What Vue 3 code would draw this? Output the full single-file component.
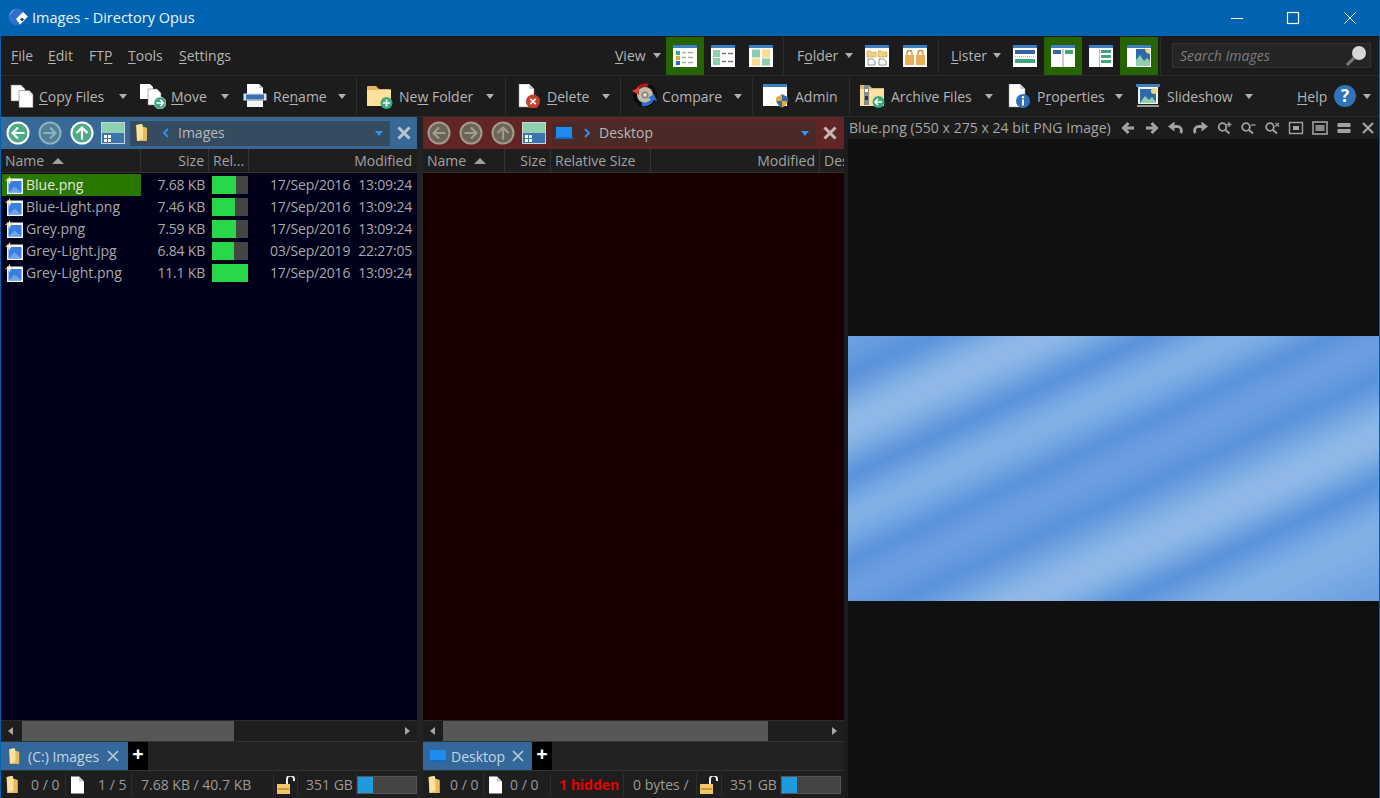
<script setup>
const parts = (s) => {
  const i = s.indexOf('&')
  if (i < 0) return [s, '', '']
  return [s.slice(0, i), s[i + 1], s.slice(i + 2)]
}

const menus = [
  { t: '&File', w: 37 }, { t: '&Edit', w: 41 }, { t: 'FT&P', w: 39 }, { t: '&Tools', w: 51 }, { t: '&Settings', w: 60 }
]

const topGroups = [
  { t: '&View', w: 38, icons: [['v1', true], ['v2', false], ['v3', false]], sepL: 3, sepR: 12 },
  { t: 'F&older', w: 48, icons: [['f1', false], ['f2', false]], sepL: 4, sepR: 11 },
  { t: '&Lister', w: 42, icons: [['l1', false], ['l2', true], ['l3', false], ['l4', true]], sepL: 2, sepR: 10 }
]

const tools = [
  { t: '&Copy Files', i: 'copy', iw: 24, w: 130, tx: 29, tw: 80 },
  { t: '&Move', i: 'move', iw: 26, w: 103, tx: 31, tw: 50 },
  { t: 'Re&name', i: 'rename', iw: 24, w: 113, tx: 30, tw: 65, sep: 10 },
  { t: 'Ne&w Folder', i: 'newfolder', iw: 26, w: 138, tx: 32, tw: 87, sep: 12 },
  { t: '&Delete', i: 'delete', iw: 24, w: 102, tx: 29, tw: 55, sep: 11 },
  { t: 'Compare', i: 'compare', iw: 26, w: 120, tx: 30, tw: 72, sep: 10 },
  { t: 'Admin', i: 'admin', iw: 26, w: 86, tx: 32, sep: 10, noCaret: true },
  { t: 'Archive Files', i: 'archive', iw: 26, w: 148, tx: 31, tw: 94 },
  { t: 'P&roperties', i: 'props', iw: 24, w: 128, tx: 29, tw: 78 },
  { t: 'Slideshow', i: 'slide', iw: 24, w: 161, tx: 31, tw: 78 }
]

const files = [
  { n: 'Blue.png', s: '7.68 KB', p: 67, d: '17/Sep/2016', h: '13:09:24', sel: true },
  { n: 'Blue-Light.png', s: '7.46 KB', p: 65, d: '17/Sep/2016', h: '13:09:24' },
  { n: 'Grey.png', s: '7.59 KB', p: 66, d: '17/Sep/2016', h: '13:09:24' },
  { n: 'Grey-Light.jpg', s: '6.84 KB', p: 60, d: '03/Sep/2019', h: '22:27:05' },
  { n: 'Grey-Light.png', s: '11.1 KB', p: 100, d: '17/Sep/2016', h: '13:09:24' }
]

const panes = [
  {
    key: 'left', title: 'Images', chev: 'chev-l', loc: 'pfolder', boxW: 260, backDim: false,
    cols: [
      { t: 'Name', w: 140, sort: true }, { t: 'Size', w: 68, r: true }, { t: 'Rel...', w: 40 }, { t: 'Modified', w: 167, r: true }
    ],
    files, tab: '(C:) Images', tabW: 127, tabIcon: 'pfolder', thumb: [21, 212],
    status: [
      { w: 65, icon: 'pfolder', t: '0 / 0', tx: 30 },
      { w: 66, icon: 'fpage', t: '1 / 5', tx: 32 },
      { w: 142, t: '7.68 KB / 40.7 KB', tx: 9 },
      { w: 24, lock: true },
      { w: 59, t: '351 GB', tx: 8 }
    ], fill: 25
  },
  {
    key: 'right', title: 'Desktop', chev: 'chev-r', loc: 'desk', boxW: 264, backDim: true,
    cols: [
      { t: 'Name', w: 82, sort: true }, { t: 'Size', w: 46, r: true }, { t: 'Relative Size', w: 100 }, { t: 'Modified', w: 169, r: true }, { t: 'Des', w: 24 }
    ],
    files: [], tab: 'Desktop', tabW: 109, tabIcon: 'desk', thumb: [20, 325],
    status: [
      { w: 61, icon: 'pfolder', t: '0 / 0', tx: 27 },
      { w: 67, icon: 'fpage', t: '0 / 0', tx: 26 },
      { w: 73, t: '1 hidden', tx: 8, red: true },
      { w: 73, t: '0 bytes /', tx: 9 },
      { w: 25, lock: true },
      { w: 59, t: '351 GB', tx: 8 }
    ], fill: 25
  }
]

const viewerBtns = ['prev', 'next', 'undo', 'redo', 'zin', 'zout', 'zx', 'fit1', 'fit2', 'bars', 'vclose']

// Soft diagonal bands of the previewed image: key points along the gradient line,
// eased with a mix of a smooth curve and one that leaves the dark bands a little faster.
const bands = [
  [0, [108, 160, 225]], [36, [90, 147, 219]], [82, [144, 185, 232]], [128, [90, 147, 219]],
  [165, [130, 176, 230]], [205, [90, 147, 219]], [232, [108, 158, 224]], [262, [90, 147, 219]],
  [315, [144, 185, 232]], [358, [90, 147, 219]], [400, [130, 176, 230]], [464, [106, 157, 224]]
]
const stops = []
for (let i = 0; i < bands.length - 1; i++) {
  const [p0, c0] = bands[i]
  const [p1, c1] = bands[i + 1]
  const rising = c1[0] > c0[0]
  for (let k = 0; k < 6; k++) {
    const t = k / 6
    const smooth = t * t * (3 - 2 * t)
    const skew = rising ? Math.sin((t * Math.PI) / 2) : 1 - Math.cos((t * Math.PI) / 2)
    const e = (smooth + skew) / 2
    const c = c0.map((v, j) => Math.round(v + (c1[j] - v) * e))
    stops.push(`rgb(${c.join(',')}) ${(p0 + (p1 - p0) * t).toFixed(1)}px`)
  }
}
stops.push('rgb(106,157,224) 464px')
const stripes = `linear-gradient(155deg, ${stops.join(', ')})`
</script>

<template>
  <div class="app">
    <svg class="sprite" xmlns="http://www.w3.org/2000/svg">
      <symbol id="i-logo" viewBox="0 0 20 20">
        <circle cx="9" cy="9" r="8.500" fill="#2f6fd0"/><path d="M1.500 8a8 8 0 0 1 9-7c-4 0-7 2.500-9 7z" fill="#b5d5f7"/>
        <path d="M8 11l7-7 5 4.500-8 8z" fill="#fff"/><rect x="12.500" y="10" width="3" height="3" fill="#22466e" transform="rotate(45 14 11.500)"/>
      </symbol>
      <symbol id="i-copy" viewBox="0 0 24 24">
        <path d="M1 1h10l4 4v12H1z" fill="#fff" stroke="#777" stroke-width=".6"/>
        <path d="M9 6.500h10l4 4v13H9z" fill="#fff" stroke="#777" stroke-width=".6"/><path d="M19 6.500v4h4" fill="#ddd"/>
      </symbol>
      <symbol id="i-move" viewBox="0 0 26 26">
        <path d="M0 1h10l3 3v12H0z" fill="#fff"/><path d="M8 6h9l4 4v12H8z" fill="#fff" stroke="#777" stroke-width=".6"/>
        <circle cx="20" cy="20" r="6" fill="#3ea77b" stroke="#e8f6ef" stroke-width=".6"/>
        <path d="M16.500 20h7M20.300 16.800l3 3.200-3 3.200" stroke="#fff" stroke-width="1.600" fill="none"/>
      </symbol>
      <symbol id="i-rename" viewBox="0 0 24 24">
        <path d="M4 0h12l4 4v6H4z" fill="#fff"/><path d="M16 0v4h4" fill="#ccc"/>
        <rect x="0.500" y="9.500" width="23" height="7" fill="#cfe2f3"/><rect x="3" y="10.500" width="18" height="5" fill="#3d70ab"/>
        <rect x="4" y="16.500" width="16" height="6.500" fill="#f4f4f4"/>
      </symbol>
      <symbol id="i-newfolder" viewBox="0 0 26 26">
        <path d="M0 4a1 1 0 0 1 1-1h8l3 3h11a1 1 0 0 1 1 1v16H0z" fill="#e4b45e"/><path d="M0 7h24v16H0z" fill="#fbe19a"/>
        <circle cx="19.500" cy="20" r="6" fill="#3ea77b"/><path d="M19.500 16.500v7M16 20h7" stroke="#fff" stroke-width="1.600"/>
      </symbol>
      <symbol id="i-delete" viewBox="0 0 24 24">
        <path d="M1 0h10l5 5v18H1z" fill="#fff" stroke="#888" stroke-width=".5"/><path d="M11 0v5h5" fill="#ccc"/>
        <circle cx="15" cy="17.500" r="7" fill="#c8402c"/><path d="M12.300 14.800l5.400 5.400M17.700 14.800l-5.400 5.400" stroke="#fff" stroke-width="1.700"/>
      </symbol>
      <symbol id="i-compare" viewBox="0 0 26 26">
        <circle cx="13" cy="12" r="12" fill="#0c0c0c"/><path d="M4 5a11 11 0 0 1 13-4l-2 3a8 8 0 0 0-9 4z" fill="#b01818"/>
        <circle cx="13" cy="12" r="8" fill="#bfbcae"/><circle cx="13" cy="12" r="3.500" fill="#8b8676"/><circle cx="13" cy="12" r="1.800" fill="#e8e6dc"/>
        <path d="M0 8l7-4v8z" fill="#e0403a"/><path d="M10 23a11 11 0 0 0 12-6l3 1-3-7-6 4 3 1a7 7 0 0 1-9 3z" fill="#2c6fd0"/>
      </symbol>
      <symbol id="i-admin" viewBox="0 0 26 26">
        <rect x="0" y="1" width="24" height="22" fill="#fff"/><rect x="0" y="1" width="24" height="3" fill="#3f7fc1"/>
        <path d="M19 11l6 3.500c0 5-2 8-6 10-4-2-6-5-6-10z" fill="#e2a93b"/><path d="M19 11v7h6c.2-1 .3-2.300 0-3.500zM19 18v6.500c-3-1.500-5-4-5.800-6.500z" fill="#2f6aad"/>
      </symbol>
      <symbol id="i-archive" viewBox="0 0 26 26">
        <path d="M0 2h9l3 3h12v18H0z" fill="#d8b874"/><path d="M0 6h24v17H0z" fill="#f7e2a6"/>
        <rect x="4" y="2" width="5" height="20" fill="#8a8a86"/><rect x="5" y="6" width="3" height="3" fill="#fff"/><rect x="5" y="13" width="3" height="4" fill="#333"/>
        <circle cx="18.500" cy="19" r="6" fill="#3ea77b"/><path d="M22 19h-7M18 15.800L15 19l3 3.200" stroke="#fff" stroke-width="1.600" fill="none"/>
      </symbol>
      <symbol id="i-props" viewBox="0 0 24 24">
        <path d="M1 0h11l5 5v18H1z" fill="#fff" stroke="#888" stroke-width=".5"/><path d="M12 0v5h5" fill="#ccc"/>
        <circle cx="15" cy="17" r="7" fill="#2f70b7"/><circle cx="15" cy="13.300" r="1.200" fill="#fff"/><rect x="14" y="15.500" width="2" height="6" fill="#fff"/>
      </symbol>
      <symbol id="i-slide" viewBox="0 0 24 24">
        <rect x="0" y="0" width="24" height="3" fill="#3f7fc1"/><rect x="2" y="3" width="20" height="17" fill="#f2f2f2"/>
        <rect x="4" y="5" width="16" height="14" fill="#2e6ba8"/><circle cx="18" cy="7" r="3" fill="#f5d77f"/>
        <path d="M4 19l5-7 4 4 3-3 4 5v1z" fill="#8fd0ad"/><rect x="1" y="21" width="22" height="2" fill="#9a9a9a"/>
      </symbol>
      <symbol id="i-v1" viewBox="0 0 24 24">
        <rect y="1" width="24" height="22" fill="#fff"/><rect y="1" width="24" height="3" fill="#3f7fc1"/>
        <rect x="3" y="7" width="4" height="4" fill="#3ea77b"/><rect x="3" y="12" width="4" height="4" fill="#e2a93b"/><rect x="3" y="17" width="4" height="4" fill="#2f6ab0"/>
        <path d="M9 8.500h4M15 8.500h5M9 13.500h4M15 13.500h5M9 18.500h4M15 18.500h5" stroke="#aaa" stroke-width="1.600"/>
      </symbol>
      <symbol id="i-v2" viewBox="0 0 24 24">
        <rect y="1" width="24" height="22" fill="#fff"/><rect y="1" width="24" height="3" fill="#3f7fc1"/>
        <rect x="2" y="6" width="7" height="7" fill="#8ccfae"/><rect x="2" y="14" width="7" height="7" fill="#8ccfae"/>
        <path d="M11 9.500h4M17 9.500h5M11 17.500h4M17 17.500h5" stroke="#777" stroke-width="1.300"/>
      </symbol>
      <symbol id="i-v3" viewBox="0 0 24 24">
        <rect y="1" width="24" height="22" fill="#fff"/><rect y="1" width="24" height="3" fill="#3f7fc1"/>
        <rect x="3" y="5.500" width="8" height="8" fill="#8ccfae"/><rect x="13" y="5.500" width="8" height="8" fill="#f8dc90"/>
        <rect x="3" y="14.500" width="8" height="7" fill="#f8dc90"/><rect x="13" y="14.500" width="8" height="7" fill="#8ccfae"/>
      </symbol>
      <symbol id="i-f1" viewBox="0 0 24 24">
        <rect y="1" width="24" height="22" fill="#fff"/><rect y="1" width="24" height="3" fill="#3f7fc1"/>
        <path d="M2 7h3l1 1h5v5H2zM13 7h3l1 1h5v5h-9z" fill="#f5cf7c" stroke="#b08a3a" stroke-width=".5"/>
        <path d="M3 15h5l2 2v4H3zM14 15h5l2 2v4h-7z" fill="#fff" stroke="#666" stroke-width=".7"/>
      </symbol>
      <symbol id="i-f2" viewBox="0 0 24 24">
        <rect y="1" width="24" height="22" fill="#fff"/><rect y="1" width="24" height="3" fill="#3f7fc1"/>
        <rect x="2" y="11" width="9" height="10" fill="#eaae55"/><rect x="13" y="11" width="9" height="10" fill="#eaae55"/>
        <path d="M4 11V9a2.500 2.500 0 0 1 5 0v2M15 11V9a2.500 2.500 0 0 1 5 0v2" stroke="#c88d38" stroke-width="1.300" fill="none"/>
      </symbol>
      <symbol id="i-l1" viewBox="0 0 24 24">
        <rect y="1" width="24" height="22" fill="#fff"/><rect y="1" width="24" height="3" fill="#3f7fc1"/>
        <rect x="2" y="6" width="20" height="4" fill="#3465a4"/><path d="M2 12.500h20" stroke="#bbb" stroke-dasharray="1 1"/><rect x="2" y="15" width="20" height="4" fill="#3ea77b"/>
      </symbol>
      <symbol id="i-l2" viewBox="0 0 24 24">
        <rect y="1" width="24" height="22" fill="#fff"/><rect y="1" width="24" height="3" fill="#3f7fc1"/>
        <rect x="2" y="6" width="8" height="4" fill="#3465a4"/><rect x="14" y="6" width="8" height="4" fill="#3ea77b"/><rect x="11.500" y="5" width="1" height="18" fill="#999"/>
      </symbol>
      <symbol id="i-l3" viewBox="0 0 24 24">
        <rect y="1" width="24" height="22" fill="#fff"/><rect y="1" width="24" height="3" fill="#3f7fc1"/>
        <rect x="10" y="5" width="1" height="18" fill="#bbb"/>
        <rect x="12" y="6" width="10" height="3" fill="#3ea77b"/><rect x="12" y="11" width="10" height="3" fill="#3ea77b"/><rect x="12" y="16" width="10" height="3" fill="#3ea77b"/>
      </symbol>
      <symbol id="i-l4" viewBox="0 0 24 24">
        <rect y="1" width="24" height="22" fill="#fff"/><rect y="1" width="24" height="3" fill="#3f7fc1"/>
        <rect x="9" y="5" width="14" height="17" fill="#2e6ba8"/><path d="M23 5v5a5 5 0 0 1-5-5z" fill="#f5d77f"/>
        <path d="M9 22v-6l4-5 4 6 3-3 3 3v5z" fill="#8fd0ad"/>
      </symbol>
      <symbol id="i-nav-l" viewBox="0 0 24 24">
        <circle cx="12" cy="12" r="10.500" fill="currentColor" stroke-width="2"/><path d="M18.500 12h-12M12 6.500L6.500 12l5.500 5.500" fill="none" stroke-width="2.200"/>
      </symbol>
      <symbol id="i-nav-r" viewBox="0 0 24 24">
        <circle cx="12" cy="12" r="10.500" fill="currentColor" stroke-width="2"/><path d="M5.500 12h12M12 6.500l5.500 5.500-5.500 5.500" fill="none" stroke-width="2.200"/>
      </symbol>
      <symbol id="i-nav-u" viewBox="0 0 24 24">
        <circle cx="12" cy="12" r="10.500" fill="currentColor" stroke-width="2"/><path d="M12 18.500v-12M6.500 12L12 6.500l5.500 5.500" fill="none" stroke-width="2.200"/>
      </symbol>
      <symbol id="i-layout" viewBox="0 0 24 22">
        <rect x=".5" y=".5" width="23" height="21" fill="#8fd0b0" stroke="#c8d4d8"/><rect x="1" y="11" width="22" height="10" fill="#3b74ae"/>
        <path d="M3 13h3v3H3zM7 13h3v3H7zM3 17h3v3H3zM7 17h3v3H7z" fill="#fff"/>
      </symbol>
      <symbol id="i-pfolder" viewBox="0 0 12 18">
        <path d="M0 1l6-1 1 3 4 1v13H1z" fill="#f7d67c"/><path d="M6 0l1 3v12l-6 2 0-16z" fill="#fbe29c"/><path d="M7 3l4 1v13H1l6-2z" fill="#e7ba5d"/>
      </symbol>
      <symbol id="i-desk" viewBox="0 0 18 14">
        <path d="M1 1h16v11H1z" fill="#1e8cf0"/><rect x="0" y="11" width="18" height="2" fill="#156ac0"/>
      </symbol>
      <symbol id="i-fpage" viewBox="0 0 13 17">
        <path d="M0 0h8l5 5v12H0z" fill="#fff"/><path d="M8 0v5h5" fill="#ccc"/>
      </symbol>
      <symbol id="i-img" viewBox="0 0 18 18">
        <rect x="2" y="2.500" width="16" height="15.500" fill="#f4f7fc"/><rect x="3.500" y="5" width="13" height="11.500" fill="#3a7fe0"/><path d="M3.500 16.500l6-6 7 6z" fill="#6ea4ea"/>
        <path d="M4.500 0l1.200 3 3 1.200-3 1.200L4.500 8.500 3.300 5.400 0 4.200l3.300-1.200z" fill="#fae07e"/><circle cx="4.500" cy="4.200" r="1.300" fill="#fff"/>
      </symbol>
      <symbol id="i-lock" viewBox="0 0 18 18">
        <rect x="0" y="8" width="13" height="10" fill="#f0c668"/><rect x="1" y="12" width="11" height="2" fill="#c89a3a"/>
        <path d="M10 8V3a3 3 0 0 1 7 0v2" fill="none" stroke="#eee" stroke-width="2"/>
      </symbol>
      <symbol id="i-search" viewBox="0 0 22 22">
        <circle cx="14" cy="8" r="7" fill="#d6d6d6"/><path d="M9 13l-7 7" stroke="#7a7a7a" stroke-width="3"/>
      </symbol>
      <symbol id="i-chev-l" viewBox="0 0 8 10"><path d="M6 1L2 5l4 4" fill="none" stroke="#2f8ff0" stroke-width="2"/></symbol>
      <symbol id="i-chev-r" viewBox="0 0 8 10"><path d="M2 1l4 4-4 4" fill="none" stroke="#2f8ff0" stroke-width="2"/></symbol>
      <symbol id="i-prev" viewBox="0 0 16 16"><path d="M14 8H6M8.500 3L3.500 8l5 5" fill="none" stroke="#a2a2a2" stroke-width="3"/></symbol>
      <symbol id="i-next" viewBox="0 0 16 16"><path d="M2 8h8M7.500 3l5 5-5 5" fill="none" stroke="#a2a2a2" stroke-width="3"/></symbol>
      <symbol id="i-undo" viewBox="0 0 16 16"><path d="M4 6.500h5a4 4 0 0 1 3.500 6.500" fill="none" stroke="#a2a2a2" stroke-width="2.800"/><path d="M6.500 1.500v10L0 6.500z" fill="#a2a2a2"/></symbol>
      <symbol id="i-redo" viewBox="0 0 16 16"><path d="M12 6.500H7A4 4 0 0 0 3.500 13" fill="none" stroke="#a2a2a2" stroke-width="2.800"/><path d="M9.500 1.500v10L16 6.500z" fill="#a2a2a2"/></symbol>
      <symbol id="i-zin" viewBox="0 0 16 16"><circle cx="6.500" cy="7" r="3.800" fill="none" stroke="#a2a2a2" stroke-width="1.800"/><path d="M9.500 10l4 3.500" stroke="#a2a2a2" stroke-width="2"/><path d="M13 2v5M10.500 4.500h5" stroke="#a2a2a2" stroke-width="1.300"/></symbol>
      <symbol id="i-zout" viewBox="0 0 16 16"><circle cx="6" cy="7" r="3.800" fill="none" stroke="#a2a2a2" stroke-width="1.800"/><path d="M9 10l4 3.500" stroke="#a2a2a2" stroke-width="2"/><path d="M11 5h4.500" stroke="#a2a2a2" stroke-width="1.300"/></symbol>
      <symbol id="i-zx" viewBox="0 0 16 16"><circle cx="6" cy="7" r="3.800" fill="none" stroke="#a2a2a2" stroke-width="1.800"/><path d="M9 10l4 3.500" stroke="#a2a2a2" stroke-width="2"/><path d="M11.500 3l3.500 3.500M15 3l-3.500 3.500" stroke="#a2a2a2" stroke-width="1.100"/></symbol>
      <symbol id="i-fit1" viewBox="0 0 16 16"><rect x="1.500" y="2.500" width="13" height="11" fill="none" stroke="#a2a2a2" stroke-width="1.400"/><rect x="5" y="6" width="6" height="4" fill="#a2a2a2"/></symbol>
      <symbol id="i-fit2" viewBox="0 0 16 16"><rect x="1" y="2" width="14" height="12" fill="none" stroke="#a2a2a2" stroke-width="1.600"/><rect x="3.500" y="5" width="9" height="6" fill="#8a8a8a"/></symbol>
      <symbol id="i-bars" viewBox="0 0 16 16"><rect x="1.500" y="3" width="13" height="4" fill="#a2a2a2"/><rect x="1.500" y="9" width="13" height="4" fill="#a2a2a2"/></symbol>
      <symbol id="i-vclose" viewBox="0 0 16 16"><path d="M3 3l10 10M13 3L3 13" stroke="#a2a2a2" stroke-width="2.200"/></symbol>
    </svg>

    <header class="titlebar">
      <svg class="logo"><use href="#i-logo"/></svg>
      <span class="title">Images - Directory Opus</span>
      <div class="winctl">
        <span class="wbtn"><svg width="14" height="14"><path d="M1 7.500h12" stroke="#fff"/></svg></span>
        <span class="wbtn"><svg width="14" height="14"><rect x="1.500" y="1.500" width="11" height="11" fill="none" stroke="#fff" stroke-width="1.200"/></svg></span>
        <span class="wbtn"><svg width="14" height="14"><path d="M1.500 1.500l11 11M12.500 1.500l-11 11" stroke="#fff"/></svg></span>
      </div>
    </header>

    <div class="menubar">
      <nav class="menus">
        <span v-for="m in menus" :key="m.t" class="mi" :style="{ width: m.w + 'px' }">{{ parts(m.t)[0] }}<u>{{ parts(m.t)[1] }}</u>{{ parts(m.t)[2] }}</span>
      </nav>
      <div class="topright">
        <template v-for="g in topGroups" :key="g.t">
          <span class="mi" :style="{ width: g.w + 'px' }">{{ parts(g.t)[0] }}<u>{{ parts(g.t)[1] }}</u>{{ parts(g.t)[2] }}</span>
          <i class="caret"></i>
          <div class="topicons">
            <span v-for="ic in g.icons" :key="ic[0]" class="topbtn" :class="{ on: ic[1] }">
              <svg class="ic24"><use :href="'#i-' + ic[0]"/></svg>
            </span>
          </div>
          <i class="sep" :style="{ marginLeft: g.sepL + 'px', marginRight: g.sepR + 'px' }"></i>
        </template>
        <div class="search">
          <span>Search Images</span>
          <svg class="searchic"><use href="#i-search"/></svg>
        </div>
      </div>
    </div>

    <div class="toolbar">
      <template v-for="b in tools" :key="b.t">
        <div class="tool" :style="{ width: b.w + 'px' }">
          <svg class="toolic" :style="{ width: b.iw + 'px', height: b.iw + 'px', marginRight: (b.tx - b.iw) + 'px' }"><use :href="'#i-' + b.i"/></svg>
          <span class="tt" :style="{ width: b.tw ? b.tw + 'px' : 'auto' }">{{ parts(b.t)[0] }}<u>{{ parts(b.t)[1] }}</u>{{ parts(b.t)[2] }}</span>
          <i v-if="!b.noCaret" class="caret"></i>
        </div>
        <i v-if="b.sep" class="sep tsep" :style="{ marginRight: b.sep + 'px' }"></i>
      </template>
      <div class="help">
        <span class="tt helpt"><u>H</u>elp</span>
        <svg class="helpic" width="22" height="22"><circle cx="11" cy="11" r="11" fill="#3173b8"/><text x="11" y="17" text-anchor="middle" fill="#fff" font-size="17" font-weight="700" font-family="Open Sans, sans-serif">?</text></svg>
        <i class="caret"></i>
      </div>
    </div>

    <main class="body">
      <template v-for="(p, idx) in panes" :key="p.key">
        <section class="pane" :class="p.key">
          <div class="phead">
            <svg class="nav" :class="{ dim: p.backDim }"><use href="#i-nav-l"/></svg>
            <svg class="nav dim"><use href="#i-nav-r"/></svg>
            <svg class="nav" :class="{ dim: p.backDim }"><use href="#i-nav-u"/></svg>
            <svg class="layout"><use href="#i-layout"/></svg>
            <div class="pathbox" :style="{ width: p.boxW + 'px' }">
              <svg class="locic" :class="p.key"><use :href="'#i-' + p.loc"/></svg>
              <svg class="chev"><use :href="'#i-' + p.chev"/></svg>
              <span class="ptitle">{{ p.title }}</span>
              <i class="caret blue"></i>
            </div>
            <svg class="pclose" width="14" height="14"><path d="M1.500 1.500l11 11M12.500 1.500l-11 11" stroke-width="3"/></svg>
          </div>
          <div class="cols">
            <div v-for="c in p.cols" :key="c.t" class="col" :class="{ r: c.r }" :style="{ width: c.w + 'px' }">
              <span>{{ c.t }}</span>
              <i v-if="c.sort" class="sortup"></i>
            </div>
          </div>
          <div class="list">
            <div v-for="f in p.files" :key="f.n" class="row">
              <div class="cname" :class="{ sel: f.sel }">
                <svg class="fic"><use href="#i-img"/></svg>
                <span>{{ f.n }}</span>
              </div>
              <div class="csize">{{ f.s }}</div>
              <div class="crel"><div class="bar"><div class="barfill" :style="{ width: f.p + '%' }"></div></div></div>
              <div class="cmod"><span>{{ f.d }}</span><span>{{ f.h }}</span></div>
            </div>
          </div>
          <div class="hscroll">
            <i class="sa left"></i>
            <div class="thumb" :style="{ marginLeft: p.thumb[0] + 'px', width: p.thumb[1] + 'px' }"></div>
            <i class="sa rightarrow"></i>
          </div>
          <div class="tabs">
            <div class="tab" :style="{ width: p.tabW + 'px' }">
              <svg class="tabic" :class="p.key"><use :href="'#i-' + p.tabIcon"/></svg>
              <span>{{ p.tab }}</span>
              <svg class="tabx" width="12" height="12"><path d="M1 1l10 10M11 1L1 11" stroke="#b9c9d8" stroke-width="1.700"/></svg>
            </div>
            <div class="plus">+</div>
          </div>
          <div class="status">
            <div v-for="(s, si) in p.status" :key="si" class="seg" :style="{ width: s.w + 'px' }">
              <svg v-if="s.icon" class="segic"><use :href="'#i-' + s.icon"/></svg>
              <svg v-if="s.lock" class="lockic"><use href="#i-lock"/></svg>
              <span v-if="s.t" class="segt" :class="{ red: s.red }" :style="{ left: s.tx + 'px' }">{{ s.t }}</span>
            </div>
            <div class="diskbar"><div class="diskfill" :style="{ width: p.fill + '%' }"></div></div>
          </div>
        </section>
        <div v-if="idx === 0" class="split"></div>
      </template>
      <div class="gap"></div>
      <section class="viewer">
        <div class="vhead">
          <span class="vtitle">Blue.png (550 x 275 x 24 bit PNG Image)</span>
          <div class="vbtns">
            <svg v-for="v in viewerBtns" :key="v" class="vb"><use :href="'#i-' + v"/></svg>
          </div>
        </div>
        <div class="vbody"><div class="picture" :style="{ backgroundImage: stripes }"></div></div>
      </section>
    </main>
  </div>
</template>

<style scoped>
.app { width: 1380px; height: 798px; display: flex; flex-direction: column; box-sizing: border-box; border-left: 1px solid #0063b1; border-right: 1px solid #0063b1; background: #1c1c1c; overflow: hidden; font-family: "Open Sans", "Noto Sans", sans-serif; font-size: 14px; color: #b4b4b4; position: relative; }
.sprite { position: absolute; width: 0; height: 0; }
u { text-underline-offset: 2px; text-decoration-thickness: 1px; }
i { display: block; flex: none; }

.titlebar { height: 36px; flex: none; background: #0063b1; display: flex; align-items: center; color: #fff; margin: 0 -1px; padding-left: 8px; }
.logo { width: 20px; height: 20px; margin-right: 4px; }
.title { font-size: 14.500px; color: #eef4fa; margin-bottom: 2px; }
.winctl { margin-left: auto; display: flex; padding-right: 2px; }
.wbtn { width: 56.500px; height: 36px; display: flex; align-items: center; justify-content: center; }

.menubar { height: 40px; flex: none; display: flex; align-items: center; border-bottom: 1px solid #2b2b2b; box-sizing: border-box; background: #1c1c1c; }
.menus { display: flex; padding-left: 10px; }
.mi { display: block; flex: none; white-space: nowrap; }
.topright { margin-left: auto; display: flex; align-items: center; height: 100%; padding-right: 8px; }
.topicons { display: flex; margin-left: 5px; }
.topbtn { width: 38px; height: 38px; display: flex; align-items: center; justify-content: center; }
.topbtn.on { background: #266400; }
.ic24 { width: 24px; height: 24px; flex: none; }
.sep { width: 1px; height: 36px; background: #2f2f2f; }
.topright .sep { box-sizing: content-box; padding-right: 1px; background-clip: content-box; }
.caret { width: 0; height: 0; border-left: 4.500px solid transparent; border-right: 4.500px solid transparent; border-top: 5px solid #b0b0b0; }
.caret.blue { border-top-color: #2f95ef; margin-left: auto; margin-right: 7px; }
.search { width: 199px; height: 25px; box-sizing: border-box; background: #252525; border: 1px solid #333; display: flex; align-items: center; padding-left: 7px; font-style: italic; color: #7d7d7d; position: relative; }
.searchic { width: 22px; height: 22px; margin-left: auto; margin-right: 3px; }

.toolbar { height: 41px; flex: none; display: flex; align-items: center; padding-left: 9px; border-bottom: 1px solid #2b2b2b; box-sizing: border-box; }
.tool { display: flex; align-items: center; flex: none; }
.toolic { flex: none; }
.tt { display: block; white-space: nowrap; flex: none; }
.tsep { height: 36px; }
.help { display: flex; align-items: center; }
.helpt { width: 37px; }
.helpic { margin-right: 7px; }

.body { flex: 1; min-height: 0; display: flex; }
.pane { display: flex; flex-direction: column; flex: none; }
.pane.left { width: 416px; }
.pane.right { width: 421px; }
.split { width: 6px; flex: none; background: #232323; }
.gap { width: 4px; flex: none; background: #1c1c1c; }

.phead { height: 32px; flex: none; display: flex; align-items: center; }
.left .phead { background: #376896; padding-left: 5px; }
.right .phead { background: #622525; padding-left: 4px; }
.nav { width: 24px; height: 24px; flex: none; margin-right: 8px; color: #4eab85; stroke: #fff; }
.left .nav.dim { color: #4f8096; stroke: #8fb0c0; }
.right .nav.dim { color: #6c6454; stroke: #a09c8c; }
.layout { width: 24px; height: 22px; flex: none; margin-left: -1px; margin-right: 5px; }
.right .layout { margin-right: 6px; }
.pathbox { height: 25px; flex: none; display: flex; align-items: center; border-radius: 1px; box-sizing: border-box; }
.left .pathbox { background: #344b60; padding-left: 6px; }
.right .pathbox { background: #4a2927; padding-left: 3px; }
.locic.left { width: 12px; height: 18px; margin-right: 14px; }
.locic.right { width: 18px; height: 14px; margin-right: 10px; }
.chev { width: 8px; height: 10px; margin-right: 8px; }
.ptitle { color: #b8b8b8; margin-bottom: 2px; }
.pclose { margin-left: 7px; stroke: #b9c6d2; flex: none; }
.right .pclose { stroke: #c6b8b2; }

.cols { height: 24px; flex: none; display: flex; background: #1e1e1e; border-bottom: 1px solid #333; box-sizing: border-box; overflow: hidden; color: #a2a2a2; }
.col { flex: none; box-sizing: border-box; padding: 0 4px; border-right: 1px solid #333; display: flex; align-items: center; white-space: nowrap; overflow: hidden; }
.col:last-child { border-right: none; }
.col.r { justify-content: flex-end; }
.sortup { width: 0; height: 0; border-left: 6px solid transparent; border-right: 6px solid transparent; border-bottom: 6px solid #a0a0a0; margin-left: 8px; }

.list { flex: 1; min-height: 0; padding-top: 1px; }
.left .list { background: #00001a; }
.right .list { background: #180000; }
.row { height: 22px; display: grid; grid-template-columns: 140px 68px 40px 167px; align-items: center; color: #a8a8a8; }
.cname { height: 22px; display: flex; align-items: center; margin-left: 1px; padding-left: 3px; }
.cname span { margin-bottom: 2px; }
.cname.sel { background: #2b7800; color: #e4e4e4; }
.fic { width: 18px; height: 18px; margin-right: 3px; flex: none; }
.csize { text-align: right; padding-right: 4px; margin-bottom: 2px; letter-spacing: -.2px; }
.crel { padding-left: 3px; }
.bar { width: 36px; height: 18px; background: #444; }
.barfill { height: 100%; background: #27d949; }
.cmod { display: flex; justify-content: flex-end; gap: 8px; padding-right: 4px; margin-bottom: 2px; letter-spacing: -.2px; }

.hscroll { height: 21px; flex: none; display: flex; align-items: center; background: #1e1e1e; position: relative; border-top: 1px solid #2b2b2b; box-sizing: border-box; }
.thumb { height: 100%; background: #575757; }
.sa { position: absolute; top: 6px; width: 0; height: 0; border-top: 4px solid transparent; border-bottom: 4px solid transparent; }
.sa.left { left: 7px; border-right: 5px solid #a8a8a8; }
.sa.rightarrow { right: 7px; border-left: 5px solid #a8a8a8; }

.tabs { height: 30px; flex: none; display: flex; background: #222; border-top: 1px solid #333; border-bottom: 1px solid #333; box-sizing: border-box; }
.tab { flex: none; height: 100%; background: #34689a; display: flex; align-items: center; padding-left: 8px; box-sizing: border-box; color: #c6d4e0; }
.tabic { flex: none; margin-right: 8px; }
.tabic.left { width: 11px; height: 17px; }
.tabic.right { width: 18px; height: 14px; margin-left: -2px; margin-right: 4px; }
.tabx { margin-left: 8px; flex: none; }
.right .tabx { margin-left: 7px; }
.plus { width: 20px; height: 100%; background: #000; color: #fff; font-size: 20px; font-weight: 700; line-height: 24px; text-align: center; }

.status { height: 27px; flex: none; display: flex; align-items: center; background: #1e1e1e; color: #9a9a9a; }
.seg { height: 22px; flex: none; position: relative; border-right: 1px solid #2f2f2f; box-sizing: border-box; }
.segic { position: absolute; left: 5px; top: 2px; width: 13px; height: 18px; }
.lockic { position: absolute; left: 3px; top: 2px; width: 18px; height: 18px; }
.segt { position: absolute; top: 1px; white-space: nowrap; }
.segt.red { color: #e60000; font-weight: 700; }
.seg:last-of-type { border-right: none; }
.diskbar { flex: none; width: 60px; height: 18px; background: #444; border: 1px solid #555; box-sizing: border-box; }
.diskfill { height: 100%; background: #1f9bdc; }

.viewer { flex: 1; min-width: 0; display: flex; flex-direction: column; }
.vhead { height: 22px; flex: none; display: flex; align-items: center; padding-left: 1px; padding-right: 3px; color: #a6a6a6; }
.vtitle { margin-bottom: 2px; letter-spacing: .05px; }
.vbtns { margin-left: auto; display: flex; gap: 8px; }
.vb { width: 16px; height: 16px; flex: none; }
.vbody { flex: 1; min-height: 0; background: #101010; display: flex; align-items: center; }
.picture { width: 100%; height: 265px; }
</style>

<style>
html, body { margin: 0; background: #1c1c1c; overflow: hidden; }
</style>
